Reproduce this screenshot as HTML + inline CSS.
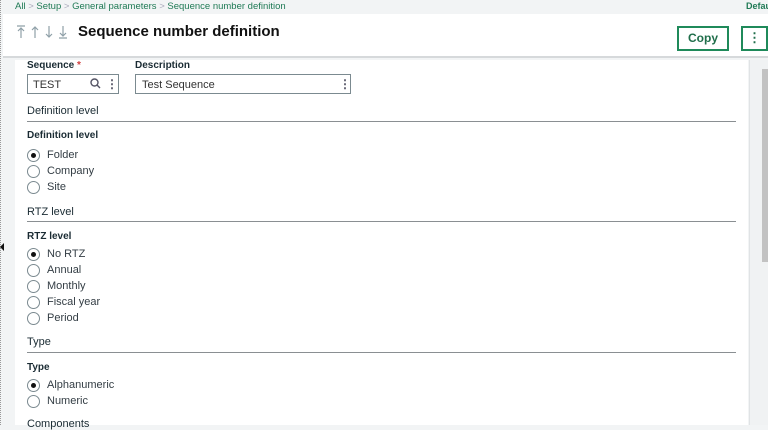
<!DOCTYPE html>
<html><head><style>
*{margin:0;padding:0;box-sizing:border-box}
body{width:768px;height:425px;overflow:hidden;background:#f2f4f5;font-family:"Liberation Sans",sans-serif;position:relative;color:#1a2b33}
.a{position:absolute;white-space:nowrap}
.crumb{font-size:9.5px;color:#1f7a55}
.sep{color:#aab}
.hd{font-size:11px;color:#1a2b33}
.lbl{font-size:10px;font-weight:bold;color:#1a2b33}
.line{position:absolute;left:27px;width:709px;height:1px;background:#8a8f92}
.r{position:absolute;left:27px;width:13px;height:13px;border:1px solid #7b8a90;border-radius:50%;background:#fff}
.r.on::after{content:"";position:absolute;left:3px;top:3px;width:5px;height:5px;border-radius:50%;background:#111}
.rt{position:absolute;left:47px;font-size:11px;color:#333d44}
</style></head><body>
<div class="a" style="left:0;top:0;width:3px;height:425px;border-left:1px dotted #999"></div>
<div class="a crumb" style="left:15px;top:1px">All <span class="sep">&gt;</span> Setup <span class="sep">&gt;</span> General parameters <span class="sep">&gt;</span> Sequence number definition</div>
<div class="a" style="left:746px;top:1px;font-size:9px;font-weight:bold;color:#1f7a55">Defau</div>
<div class="a" style="left:3px;top:14px;width:765px;height:44px;background:#fff;border-bottom:2px solid #d6d9db"></div>
<svg class="a" style="left:16px;top:25px" width="52" height="14" viewBox="0 0 52 14" fill="none" stroke="#8fa0a8" stroke-width="1.2">
<path d="M1 1h8M5 3v10M2 6l3-3 3 3"/>
<path d="M19 2v11M16 5l3-3 3 3"/>
<path d="M33 1v11M30 9l3 3 3-3"/>
<path d="M47 1v10M44 8l3 3 3-3M43 13h8"/>
</svg>
<div class="a" style="left:78px;top:23px;font-size:15px;font-weight:bold;color:#111">Sequence number definition</div>
<div class="a" style="left:677px;top:26px;width:52px;height:25px;border:2px solid #1f8a5a;font-size:12px;font-weight:bold;color:#1f6e4a;text-align:center;line-height:21px">Copy</div>
<div class="a" style="left:741px;top:26px;width:27px;height:25px;border:2px solid #1f8a5a;font-size:13px;font-weight:bold;color:#1f6e4a;text-align:center;line-height:20px">⋮</div>
<div class="a" style="left:15px;top:60px;width:733px;height:365px;background:#fff"></div>
<div class="a" style="left:749px;top:60px;width:19px;height:365px;background:#f0f2f3;border-left:1px solid #e0e3e5"></div>
<div class="a" style="left:762px;top:69px;width:6px;height:193px;background:#c2c2c2"></div>
<div class="a lbl" style="left:27px;top:60px">Sequence <span style="color:#d04040">*</span></div>
<div class="a lbl" style="left:135px;top:60px">Description</div>
<div class="a" style="left:27px;top:74px;width:92px;height:20px;border:1px solid #7b8a90"></div>
<div class="a" style="left:33px;top:79px;font-size:11px;color:#333">TEST</div>
<svg class="a" style="left:90px;top:78px" width="11" height="11" viewBox="0 0 11 11" fill="none" stroke="#556" stroke-width="1.4"><circle cx="4.5" cy="4.5" r="3.5"/><path d="M7 7l3 3"/></svg>
<div class="a" style="left:106px;top:77px;font-size:12px;font-weight:bold;color:#556">⋮</div>
<div class="a" style="left:135px;top:74px;width:216px;height:20px;border:1px solid #7b8a90"></div>
<div class="a" style="left:142px;top:79px;font-size:11px;color:#333">Test Sequence</div>
<div class="a" style="left:339px;top:77px;font-size:12px;font-weight:bold;color:#556">⋮</div>

<div class="a hd" style="left:27px;top:105px">Definition level</div>
<div class="line" style="top:121px"></div>
<div class="a lbl" style="left:27px;top:130px">Definition level</div>
<div class="r on" style="top:149px"></div><div class="rt" style="top:149px">Folder</div>
<div class="r" style="top:165px"></div><div class="rt" style="top:165px">Company</div>
<div class="r" style="top:181px"></div><div class="rt" style="top:181px">Site</div>

<div class="a hd" style="left:27px;top:206px">RTZ level</div>
<div class="line" style="top:221px"></div>
<div class="a lbl" style="left:27px;top:231px">RTZ level</div>
<div class="r on" style="top:248px"></div><div class="rt" style="top:248px">No RTZ</div>
<div class="r" style="top:264px"></div><div class="rt" style="top:264px">Annual</div>
<div class="r" style="top:280px"></div><div class="rt" style="top:280px">Monthly</div>
<div class="r" style="top:296px"></div><div class="rt" style="top:296px">Fiscal year</div>
<div class="r" style="top:312px"></div><div class="rt" style="top:312px">Period</div>

<div class="a hd" style="left:27px;top:336px">Type</div>
<div class="line" style="top:352px"></div>
<div class="a lbl" style="left:27px;top:362px">Type</div>
<div class="r on" style="top:379px"></div><div class="rt" style="top:379px">Alphanumeric</div>
<div class="r" style="top:395px"></div><div class="rt" style="top:395px">Numeric</div>
<div class="a hd" style="left:27px;top:418px">Components</div>
<div class="a" style="left:0;top:243px;width:0;height:0;border-top:4px solid transparent;border-bottom:4px solid transparent;border-right:4px solid #111"></div>
</body></html>
